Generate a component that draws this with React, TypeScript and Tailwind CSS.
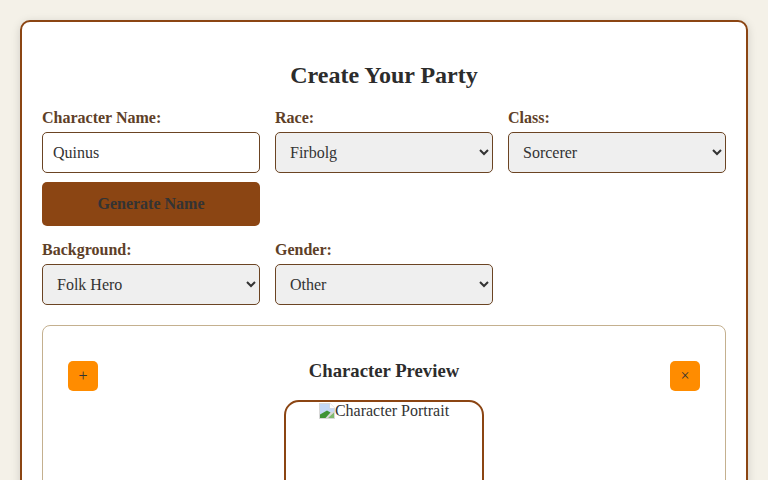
const labelClass = "block mb-[5px] text-[16px] leading-[18px] font-bold text-[#5e4028]";
const selectClass =
  "block w-full h-[41px] pl-[10px] pr-0 border border-[#6b4423] rounded-[5px] bg-[#efefef] text-[16px] text-[#333333]";

const SelectField = ({ label, value, options }: { label: string; value: string; options: string[] }) => (
  <div>
    <label className={labelClass}>{label}</label>
    <select defaultValue={value} className={selectClass}>
      {options.map((o) => (
        <option key={o}>{o}</option>
      ))}
    </select>
  </div>
);

const BrokenImage = () => (
  <svg width="16" height="16" viewBox="0 0 16 16" className="inline-block align-[-3px]">
    <path d="M0 0H11L16 5V16H0Z" fill="#d8d8d8" />
    <path d="M1 1H10.5V5.5H15V8.5L1 11.5Z" fill="#c4d8f5" />
    <path d="M11 0.5L15.5 5H11Z" fill="#ffffff" />
    <path d="M1 15V11.5L8 7.5L11.5 9.5L6.5 15Z" fill="#3f9436" />
    <path d="M9 15L15 9.5V15Z" fill="#7fb96c" />
  </svg>
);

export default function App() {
  return (
    <div className="h-screen overflow-hidden bg-[#f4f1e8] p-5 font-['Liberation_Serif',serif] text-[#333333]">
      <div className="bg-white border-2 border-[#8b4513] rounded-[10px] px-5 pb-5 shadow-[0_2px_10px_rgba(0,0,0,0.15)]">
        <h2 className="pt-[20px] pb-[20px] mt-[20px] text-center text-[24px] leading-[27px] font-bold text-[#2c2c2c]">
          Create Your Party
        </h2>

        <div className="grid grid-cols-3 gap-x-[15px] gap-y-[15px]">
          <div>
            <label className={labelClass}>Character Name:</label>
            <input
              type="text"
              defaultValue="Quinus"
              className="block w-full h-[41px] px-[10px] border border-[#6b4423] rounded-[5px] bg-white text-[16px] text-[#333333]"
            />
            <button className="block w-full h-[44px] mt-[9px] rounded-[5px] bg-[#8b4513] text-[16px] font-bold text-[#333333]">
              Generate Name
            </button>
          </div>
          <SelectField label="Race:" value="Firbolg" options={["Firbolg", "Human", "Elf", "Dwarf"]} />
          <SelectField label="Class:" value="Sorcerer" options={["Sorcerer", "Wizard", "Fighter", "Rogue"]} />
          <SelectField label="Background:" value="Folk Hero" options={["Folk Hero", "Acolyte", "Noble", "Sage"]} />
          <SelectField label="Gender:" value="Other" options={["Other", "Male", "Female"]} />
        </div>

        <div className="mt-5 border border-[#c4b08f] rounded-[8px] px-[25px] pt-[35px] pb-5">
          <div className="flex items-start justify-between">
            <button className="w-[30px] h-[30px] rounded-[5px] bg-[#ff8c00] text-[16px] text-[#333333]">+</button>
            <h3 className="text-[18.72px] leading-[20px] font-bold text-[#2c2c2c]">Character Preview</h3>
            <button className="w-[30px] h-[30px] rounded-[5px] bg-[#ff8c00] text-[16px] text-[#333333]">×</button>
          </div>
          <div className="w-[200px] h-[200px] mx-auto mt-[9px] border-2 border-[#8b4513] rounded-[15px] text-center text-[16px] leading-[18px]">
            <BrokenImage />
            Character Portrait
          </div>
        </div>
      </div>
    </div>
  );
}
